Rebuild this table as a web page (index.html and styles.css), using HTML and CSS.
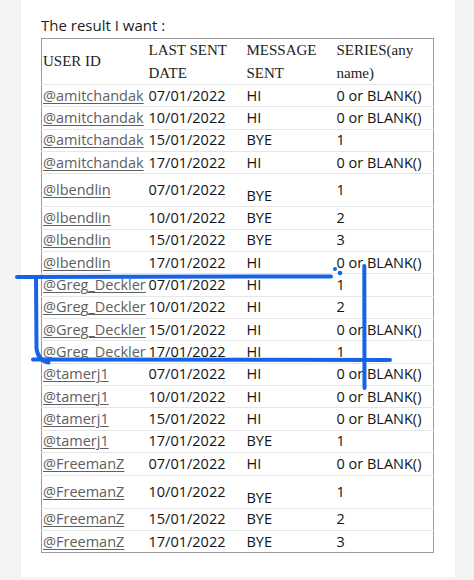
FILE: index.html
```html
<!DOCTYPE html>
<html>
<head>
<meta charset="utf-8">
<link rel="stylesheet" href="styles.css">
</head>
<body>
<div class="card">
  <p class="title">The result I want :</p>
  <table class="result">
    <colgroup><col class="c1"><col class="c2"><col class="c3"><col class="c4"></colgroup>
    <thead>
      <tr><th>USER ID</th><th>LAST SENT DATE</th><th>MESSAGE SENT</th><th>SERIES(any name)</th></tr>
    </thead>
    <tbody>
      <tr><td><a>@amitchandak</a></td><td>07/01/2022</td><td>HI</td><td>0 or BLANK()</td></tr>
      <tr><td><a>@amitchandak</a></td><td>10/01/2022</td><td>HI</td><td>0 or BLANK()</td></tr>
      <tr><td><a>@amitchandak</a></td><td>15/01/2022</td><td>BYE</td><td>1</td></tr>
      <tr><td><a>@amitchandak</a></td><td>17/01/2022</td><td>HI</td><td>0 or BLANK()</td></tr>
      <tr class="tall"><td><a>@lbendlin</a></td><td>07/01/2022</td><td class="low">BYE</td><td>1</td></tr>
      <tr><td><a>@lbendlin</a></td><td>10/01/2022</td><td>BYE</td><td>2</td></tr>
      <tr><td><a>@lbendlin</a></td><td>15/01/2022</td><td>BYE</td><td>3</td></tr>
      <tr><td><a>@lbendlin</a></td><td>17/01/2022</td><td>HI</td><td>0 or BLANK()</td></tr>
      <tr><td><a>@Greg_Deckler</a></td><td>07/01/2022</td><td>HI</td><td>1</td></tr>
      <tr><td><a>@Greg_Deckler</a></td><td>10/01/2022</td><td>HI</td><td>2</td></tr>
      <tr><td><a>@Greg_Deckler</a></td><td>15/01/2022</td><td>HI</td><td>0 or BLANK()</td></tr>
      <tr><td><a>@Greg_Deckler</a></td><td>17/01/2022</td><td>HI</td><td>1</td></tr>
      <tr><td><a>@tamerj1</a></td><td>07/01/2022</td><td>HI</td><td>0 or BLANK()</td></tr>
      <tr><td><a>@tamerj1</a></td><td>10/01/2022</td><td>HI</td><td>0 or BLANK()</td></tr>
      <tr><td><a>@tamerj1</a></td><td>15/01/2022</td><td>HI</td><td>0 or BLANK()</td></tr>
      <tr><td><a>@tamerj1</a></td><td>17/01/2022</td><td>BYE</td><td>1</td></tr>
      <tr><td><a>@FreemanZ</a></td><td>07/01/2022</td><td>HI</td><td>0 or BLANK()</td></tr>
      <tr class="tall"><td><a>@FreemanZ</a></td><td>10/01/2022</td><td class="low">BYE</td><td>1</td></tr>
      <tr><td><a>@FreemanZ</a></td><td>15/01/2022</td><td>BYE</td><td>2</td></tr>
      <tr><td><a>@FreemanZ</a></td><td>17/01/2022</td><td>BYE</td><td>3</td></tr>
    </tbody>
  </table>
</div>
<svg class="ink" width="474" height="580" viewBox="0 0 474 580">
  <g fill="none" stroke="#1763e6" stroke-width="4" stroke-linecap="round" stroke-linejoin="round">
    <path d="M17 277 L331 276.5"/>
    <path d="M36 278 L36.5 348 Q37.5 360 48.5 362.5"/>
    <path d="M33 359.5 L390 360"/>
    <path d="M364.3 266 L364.5 388"/>
  </g>
  <g fill="#1763e6">
    <circle cx="335" cy="269" r="2"/>
    <circle cx="340" cy="273" r="2.3"/>
  </g>
</svg>
</body>
</html>
```

FILE: styles.css
```css
html, body {
  margin: 0;
  padding: 0;
}
body {
  background: #f3f3f3;
  width: 474px;
  height: 580px;
  overflow: hidden;
  position: relative;
}
.card {
  margin-left: 21px;
  width: 414px;
  height: 562px;
  background: #ffffff;
  padding: 15px 0 0 20px;
}
.title {
  margin: 0 0 3px 0;
  font-family: "Open Sans", sans-serif;
  font-size: 15px;
  line-height: 20px;
  color: #1e1e1e;
}
.result {
  border-collapse: collapse;
  table-layout: fixed;
  width: 392px;
  border: 1px solid #9a9a9a;
}
.c1 { width: 106px; }
.c2 { width: 98px; }
.c3 { width: 90px; }
.c4 { width: 98px; }
.result th {
  font-family: "Liberation Serif", serif;
  font-weight: normal;
  font-size: 15px;
  line-height: 22.5px;
  text-align: left;
  vertical-align: middle;
  color: #222;
  padding: 0 0 0 1px;
}
.result thead tr {
  height: 45px;
}
.result td {
  font-family: "Open Sans", sans-serif;
  font-size: 14.5px;
  line-height: 20px;
  height: 21.35px;
  color: #141414;
  padding: 0 0 0 1px;
  border-top: 1px solid #e6e6e6;
  white-space: nowrap;
  vertical-align: middle;
}
.result tr.tall td {
  height: 32px;
}
.result td.low {
  vertical-align: bottom;
}
.result a {
  color: #606060;
  text-decoration: underline;
  text-decoration-thickness: 1px;
  text-underline-offset: 2px;
}
.ink {
  position: absolute;
  top: 0;
  left: 0;
  pointer-events: none;
}
```
